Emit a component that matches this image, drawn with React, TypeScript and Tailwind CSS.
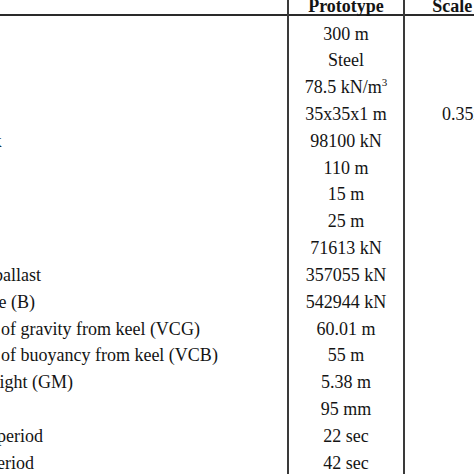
import * as React from "react";

// Cropped view of a spar-platform parameter table (prototype vs. scale model).

const ROWS: Array<[string, string, string]> = [
  ["Water depth", "300 m", ""],
  ["Material", "Steel", ""],
  ["Unit weight", "78.5 kN/m³", ""],
  ["Deck size", "35x35x1 m", "0.35x0.35"],
  ["Weight of deck", "98100 kN", ""],
  ["Draft", "110 m", ""],
  ["Diameter", "15 m", ""],
  ["Column height", "25 m", ""],
  ["Weight of hull", "71613 kN", ""],
  ["Weight of the ballast", "357055 kN", ""],
  ["Buoyancy force (B)", "542944 kN", ""],
  ["Vertical centre of gravity from keel (VCG)", "60.01 m", ""],
  ["Vertical centre of buoyancy from keel (VCB)", "55 m", ""],
  ["Metacentric height (GM)", "5.38 m", ""],
  ["Wave height", "95 mm", ""],
  ["Heave natural period", "22 sec", ""],
  ["Pitch natural period", "42 sec", ""],
];

function Value({ v }: { v: string }) {
  if (v.endsWith("³")) {
    return (
      <>
        {v.slice(0, -1)}
        <sup className="text-[11px] align-baseline relative -top-[7px]">3</sup>
      </>
    );
  }
  return <>{v}</>;
}

export default function App() {
  return (
    <div
      className="w-[474px] h-[474px] overflow-hidden bg-white text-[#141414] text-[18px]"
      style={{ fontFamily: '"Liberation Serif", "Times New Roman", serif' }}
    >
      <div className="-ml-[108px] -mt-[9px] w-[659px]">
        {/* header */}
        <div className="grid grid-cols-[397px_116px_146px] h-[25px] leading-[31px] font-bold border-b-2 border-[#2a2a2a]">
          <div className="border-r-2 border-[#3a3a3a]"></div>
          <div className="border-r-2 border-[#3a3a3a] text-center">Prototype</div>
          <div className="text-center whitespace-nowrap">Scale model</div>
        </div>
        {/* body */}
        <div className="grid grid-cols-[397px_116px_146px]">
          <div className="border-r-2 border-[#3a3a3a] h-[4.5px]"></div>
          <div className="border-r-2 border-[#3a3a3a] h-[4.5px]"></div>
          <div></div>
          {ROWS.map(([label, proto, scale]) => (
            <React.Fragment key={label}>
              <div className="border-r-2 border-[#3a3a3a] h-[26.83px] leading-[26.83px] whitespace-nowrap">{label}</div>
              <div className="border-r-2 border-[#3a3a3a] h-[26.83px] leading-[26.83px] text-center whitespace-nowrap">
                <Value v={proto} />
              </div>
              <div className="h-[26.83px] leading-[26.83px] text-center whitespace-nowrap">{scale}</div>
            </React.Fragment>
          ))}
        </div>
      </div>
    </div>
  );
}
